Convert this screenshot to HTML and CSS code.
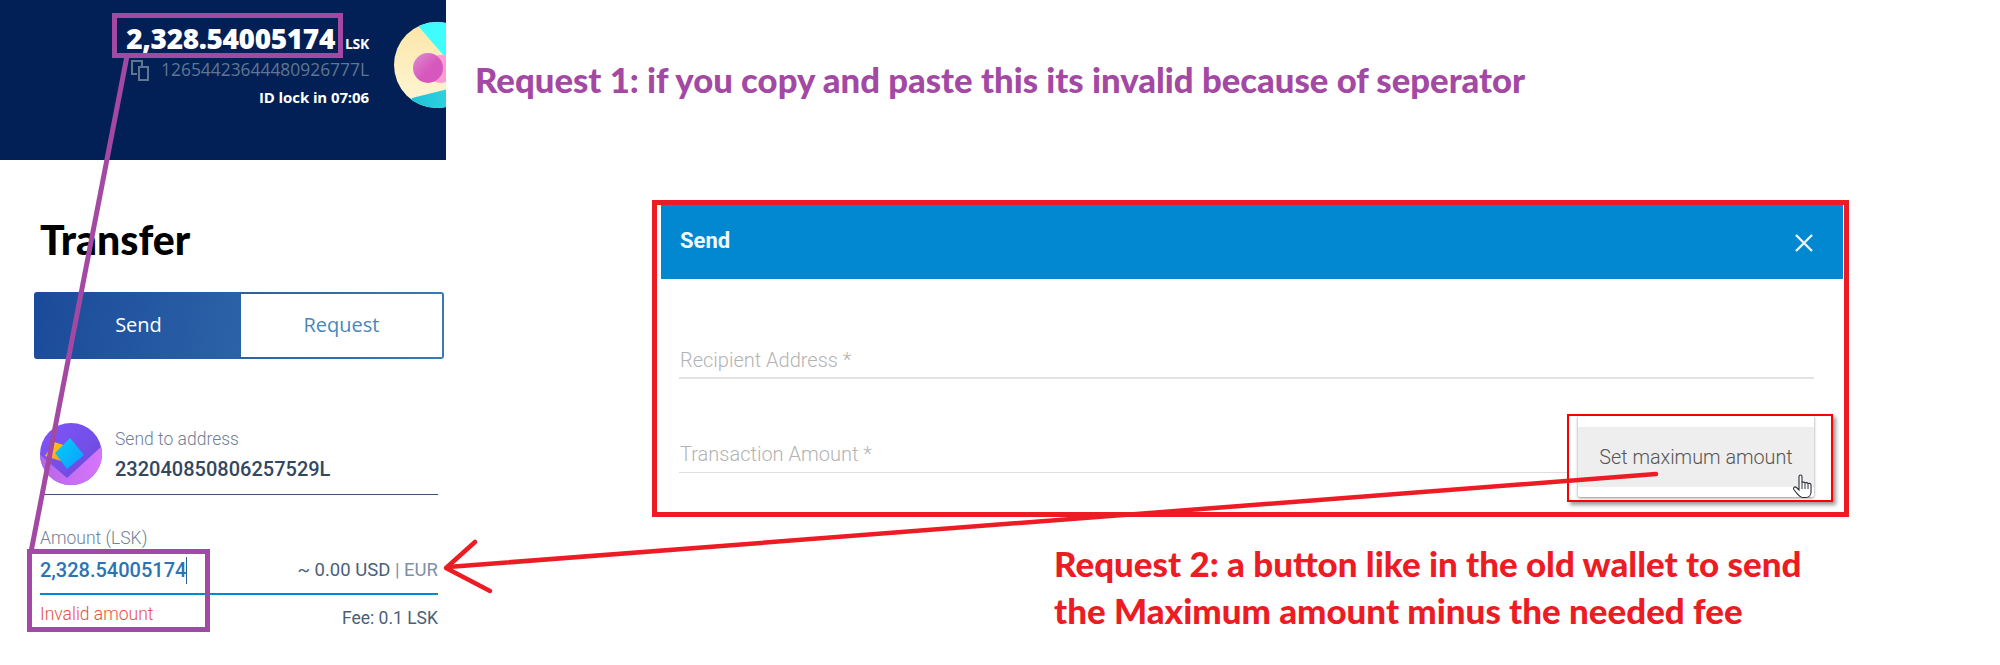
FILE: index.html
```html
<!DOCTYPE html>
<html lang="en">
<head>
<meta charset="utf-8">
<title>Feature requests</title>
<link rel="stylesheet" href="styles.css">
</head>
<body>
<div class="page">
  <section class="wallet">
    <header class="account">
      <div class="account-info">
        <div class="balance"><span class="balance-value">2,328.54005174</span><span class="balance-unit">LSK</span></div>
        <div class="address">
          <svg class="copy" viewBox="0 0 18 21" width="18" height="21"><path d="M6 14H1V1h10v5" fill="none" stroke="#5f7590" stroke-width="2"/><rect x="8" y="7" width="9" height="13" fill="none" stroke="#5f7590" stroke-width="2"/></svg>
          <span>12654423644480926777L</span>
        </div>
        <div class="lock">ID lock in 07:06</div>
      </div>
      <svg class="account-avatar" viewBox="0 0 86 86" width="86" height="86">
        <defs>
          <clipPath id="clipA"><circle cx="43" cy="43" r="43"/></clipPath>
          <linearGradient id="cream" x1="0" y1="0" x2="0" y2="1"><stop offset="0" stop-color="#fbe6a8"/><stop offset="1" stop-color="#fff6d6"/></linearGradient>
          <linearGradient id="teal" x1="0" y1="0" x2="1" y2="0"><stop offset="0" stop-color="#1fc3d8"/><stop offset="1" stop-color="#3fe0ea"/></linearGradient>
          <linearGradient id="pink" x1="0" y1="0" x2="1" y2="1"><stop offset="0" stop-color="#e08ed0"/><stop offset=".55" stop-color="#d658bc"/></linearGradient>
        </defs>
        <g clip-path="url(#clipA)">
          <rect width="86" height="86" fill="url(#cream)"/>
          <path d="M25 5 L25 -2 L90 -2 L90 80 Z" fill="#3ffcff"/>
          <path d="M18 76 L90 58 L90 90 L18 90 Z" fill="url(#teal)"/>
          <circle cx="47" cy="47" r="14" fill="#ff9cd2"/>
          <circle cx="34" cy="46" r="15" fill="url(#pink)"/>
        </g>
      </svg>
    </header>
    <div class="transfer">
      <h1 class="transfer-title">Transfer</h1>
      <div class="tabs">
        <button class="tab tab-active">Send</button>
        <button class="tab">Request</button>
      </div>
      <div class="recipient">
        <svg class="recipient-avatar" viewBox="0 0 62 62" width="62" height="62">
          <defs>
            <clipPath id="clipB"><circle cx="31" cy="31" r="31"/></clipPath>
            <linearGradient id="violet" x1="0" y1="0" x2="1" y2="1"><stop offset="0" stop-color="#7f56fb"/><stop offset="1" stop-color="#6a48d8"/></linearGradient>
            <linearGradient id="orchid" x1="0" y1="0" x2="1" y2="0"><stop offset="0" stop-color="#b765e6"/><stop offset="1" stop-color="#d676fd"/></linearGradient>
            <linearGradient id="amber" x1="0" y1="0" x2="1" y2="1"><stop offset="0" stop-color="#ffd414"/><stop offset="1" stop-color="#fb8e1f"/></linearGradient>
            <linearGradient id="azure" x1="0" y1="0" x2="1" y2="1"><stop offset="0" stop-color="#06d0f5"/><stop offset="1" stop-color="#0a9cff"/></linearGradient>
          </defs>
          <g clip-path="url(#clipB)">
            <rect width="62" height="62" fill="url(#violet)"/>
            <path d="M-2 30 L27 55 L62 23 L62 64 L-2 64 Z" fill="url(#orchid)"/>
            <path d="M14 19 L30 24 L24 39 L5 33 Z" fill="url(#amber)"/>
            <path d="M30 15 L44 32 L27 46 L15 30 Z" fill="url(#azure)"/>
          </g>
        </svg>
        <div class="recipient-text">
          <div class="field-label">Send to address</div>
          <div class="recipient-address">232040850806257529L</div>
        </div>
      </div>
      <div class="amount">
        <div class="field-label">Amount (LSK)</div>
        <div class="amount-row">
          <span class="amount-value">2,328.54005174</span>
          <span class="amount-converted">~ 0.00 USD <span class="muted">|</span> <span class="muted">EUR</span></span>
        </div>
        <div class="amount-foot">
          <span class="amount-error">Invalid amount</span>
          <span class="amount-fee">Fee: 0.1 LSK</span>
        </div>
      </div>
    </div>
  </section>

  <section class="notes">
    <h2 class="note note-purple">Request 1: if you copy and paste this its invalid because of seperator</h2>
    <div class="modal">
      <div class="modal-head">
        <span class="modal-title">Send</span>
        <svg class="modal-close" viewBox="0 0 18 18" width="18" height="18"><path d="M1 1L17 17M17 1L1 17" stroke="#eaf6fc" stroke-width="2.4" fill="none"/></svg>
      </div>
      <div class="modal-body">
        <div class="modal-field modal-field-first">Recipient Address *</div>
        <div class="modal-row">
          <div class="modal-field modal-field-amount">Transaction Amount *</div>
          <div class="max-frame">
            <div class="max-card"><div class="max-button">Set maximum amount</div></div>
          </div>
        </div>
      </div>
    </div>
    <h2 class="note note-red">Request 2: a button like in the old wallet to send<br>the Maximum amount minus the needed fee</h2>
  </section>

  <svg class="marks" viewBox="0 0 2000 665" width="2000" height="665">
    <g fill="none" stroke="#a349a4" stroke-width="5">
      <rect x="114.500" y="15.500" width="226" height="40"/>
      <rect x="29.500" y="551.500" width="178" height="78"/>
      <path d="M127 56 L31 552"/>
    </g>
    <g fill="none" stroke="#ed1c24" stroke-width="4.500" stroke-linecap="round" stroke-linejoin="round">
      <path d="M1656 474 L448 567"/>
      <path d="M475 542 L446 568 L490 591"/>
    </g>
    <g transform="translate(1793 474)">
      <path d="M6 11 V2.500 C6 .5 9 .5 9 2.500 V9 C9 7.800 12 7.800 12 9.500 C12 8.200 15 8.200 15 10 C15 9 18 9 18 11 V18 C18 21 16 23.500 13 23.500 H9.500 C7 23.500 6 21.500 4 19.500 L.8 15.500 C-.3 13.500 2 12 3.500 13.500 L6 16 Z" fill="#fff" stroke="#2a2f38" stroke-width="1.100"/>
      <path d="M9 9V15M12 9.500V15M15 10V15" stroke="#2a2f38" stroke-width="1" fill="none"/>
    </g>
  </svg>
</div>
</body>
</html>
```
FILE: styles.css
```css
* { box-sizing: border-box; }
html, body { margin: 0; padding: 0; background: #fff; }
.page {
  position: relative;
  width: 2000px;
  height: 665px;
  overflow: hidden;
  display: grid;
  grid-template-columns: 446px 1fr;
  font-family: Roboto, "Liberation Sans", sans-serif;
}
.marks { position: absolute; left: 0; top: 0; pointer-events: none; }

/* wallet header */
.account {
  height: 160px;
  background: #022055;
  display: flex;
  justify-content: flex-end;
  align-items: flex-start;
  gap: 25px;
  overflow: hidden;
  color: #fff;
  font-family: "Open Sans", sans-serif;
  padding-top: 21px;
}
.account-info { display: flex; flex-direction: column; align-items: flex-end; }
.balance { display: flex; align-items: baseline; gap: 10px; line-height: 34px; height: 34px; }
.balance-value { font-size: 28px; font-weight: 800; letter-spacing: -.35px; }
.balance-unit { font-size: 14px; font-weight: 700; letter-spacing: -.3px; }
.address {
  display: flex; align-items: center; gap: 12px;
  font-size: 17.400px; line-height: 24px; color: #5f7590; margin-top: 2px; height: 24px;
}
.copy { margin-top: 2px; }
.lock { font-size: 15px; font-weight: 700; line-height: 20px; margin-top: 6px; letter-spacing: -.1px; }
.account-avatar { flex: none; margin: 1px -34px 0 0; }

/* transfer panel */
.transfer { padding: 0 2px 0 34px; }
.transfer-title {
  margin: 55px 0 0 6px;
  font-family: Lato, sans-serif;
  font-weight: 900;
  font-size: 41px;
  line-height: 50px;
  color: #000;
}
.tabs {
  margin-top: 27px;
  display: grid;
  grid-template-columns: 205px 1fr;
  height: 67px;
  border-radius: 3px;
  padding: 2px;
  background: linear-gradient(100deg, #1b4a9a, #3b7ab3);
}
.tab {
  border: 0;
  background: #fff;
  color: #4a87ba;
  font-family: "Open Sans", sans-serif;
  font-size: 20px;
  padding: 0 0 2px;
}
.tab-active { background: transparent; color: #fff; }

.recipient {
  margin: 64px 6px 0 0;
  height: 72px;
  padding-left: 6px;
  display: flex;
  gap: 13px;
  position: relative;
}
.recipient::after {
  content: "";
  position: absolute;
  left: 10px; right: 0; bottom: 0;
  height: 1px;
  background: #3b5370;
}
.recipient-avatar { flex: none; }
.field-label { font-size: 17.500px; font-weight: 300; color: #6f8197; line-height: 22px; }
.recipient-text .field-label { margin-top: 5px; }
.recipient-address { font-size: 20px; font-weight: 500; color: #33475f; line-height: 24px; margin-top: 7px; }

.amount { margin: 32px 6px 0 6px; }
.amount-row {
  display: flex; justify-content: space-between; align-items: center;
  height: 45px;
  border-bottom: 2px solid #0288d1;
  padding-bottom: 3px;
  margin-top: 1px;
}
.amount-value {
  font-size: 20px; font-weight: 500; color: #2a74b5; line-height: 27px;
  border-right: 1px solid #2a5f8f;
}
.amount-converted { font-size: 18.500px; color: #4a5f78; }
.muted { color: #7e90a6; }
.amount-foot { display: flex; justify-content: space-between; align-items: flex-start; margin-top: 8px; }
.amount-error { font-size: 17.500px; font-weight: 300; color: #e8503f; line-height: 22px; }
.amount-fee { font-size: 17.500px; color: #4a5f78; line-height: 24px; margin-top: 3px; }

/* right side notes */
.notes { padding: 60px 0 0 29px; display: flex; flex-direction: column; align-items: flex-start; }
.note { margin: 0; font-family: Lato, sans-serif; font-weight: 900; }
.note-purple { color: #a349a4; font-size: 34.700px; line-height: 40px; }
.note-red { color: #ed1c24; font-size: 34.900px; line-height: 47px; margin: 23px 0 0 579px; }

.modal {
  margin: 100px 0 0 177px;
  width: 1197px;
  height: 317px;
  border: 5px solid #ed1c24;
  padding-left: 4px;
}
.modal-head {
  height: 74px;
  width: 1182px;
  background: #0288d1;
  display: flex;
  justify-content: space-between;
  align-items: center;
  padding: 0 30px 0 19px;
}
.modal-title { color: #f2fafe; font-size: 22px; font-weight: 700; margin-top: -4px; }
.modal-close { margin-top: 2px; }
.modal-body { padding: 0 0 0 18px; }
.modal-field { font-size: 20px; font-weight: 300; color: #b3b3b3; line-height: 26px; padding-left: 1px; }
.modal-field-first { margin-top: 68px; height: 32px; width: 1135px; border-bottom: 2px solid #e2e2e2; }
.modal-row { display: flex; align-items: flex-start; }
.modal-field-amount { width: 899px; height: 94px; padding-top: 62px; border-bottom: 1px solid #dedede; }
.max-frame {
  margin: 35px 0 0 -11px;
  width: 266px;
  height: 88px;
  border: 2px solid #f00;
  box-shadow: 3px 3px 4px rgba(0,0,0,.4);
  background: #fff;
  padding: 0 17px 0 9px;
}
.max-card {
  height: 81px;
  padding-top: 11px;
  background: #fff;
  box-shadow: 0 1px 3px rgba(0,0,0,.45);
  border-radius: 0 0 2px 2px;
}
.max-button {
  height: 60px;
  background: #eee;
  color: #555;
  font-size: 19.800px;
  font-weight: 300;
  display: flex;
  align-items: center;
  justify-content: center;
}
```
